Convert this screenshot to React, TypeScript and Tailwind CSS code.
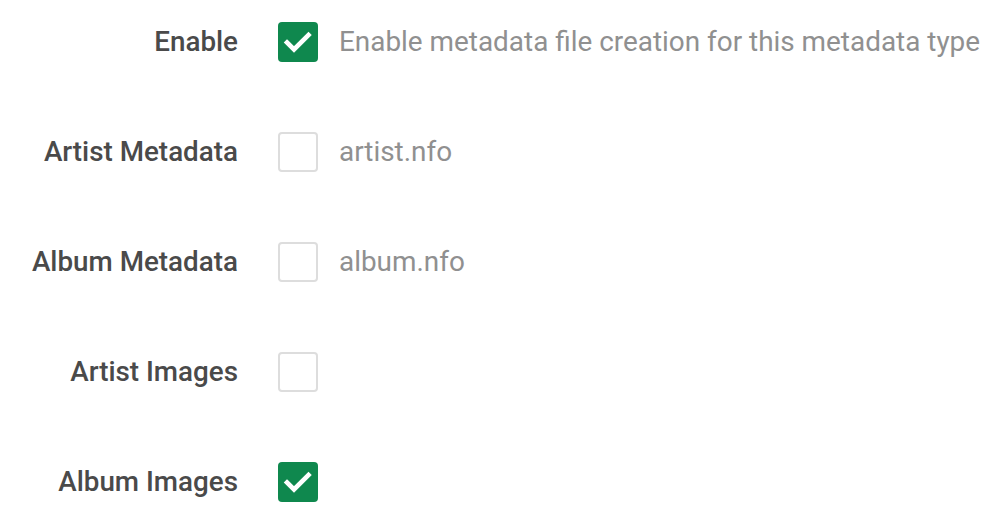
import React from "react";

type Row = { label: string; checked: boolean; help?: string };

const rows: Row[] = [
  { label: "Enable", checked: true, help: "Enable metadata file creation for this metadata type" },
  { label: "Artist Metadata", checked: false, help: "artist.nfo" },
  { label: "Album Metadata", checked: false, help: "album.nfo" },
  { label: "Artist Images", checked: false },
  { label: "Album Images", checked: true },
];

const Check = ({ checked }: { checked: boolean }) =>
  checked ? (
    <span className="flex h-[40px] w-[40px] shrink-0 items-center justify-center rounded-[4px] bg-[#0f884e]">
      <svg width="40" height="40" viewBox="0 0 40 40" fill="none">
        <path d="M9 20.5l7 7L30.5 13" stroke="white" strokeWidth="4.6" strokeLinecap="square" />
      </svg>
    </span>
  ) : (
    <span className="h-[40px] w-[40px] shrink-0 rounded-[4px] border-2 border-[#dddddd] bg-white" />
  );

export default function App() {
  return (
    <div className="h-[528px] w-[1002px] overflow-hidden bg-white font-['Roboto',sans-serif]">
      <div className="flex flex-col pt-[22px]">
        {rows.map((row) => (
          <div key={row.label} className="flex h-[110px] items-start">
            <div className="w-[238px] shrink-0 text-right text-[27.8px] font-medium leading-[40px] text-[#4a4a4a]">
              {row.label}
            </div>
            <div className="ml-[40px] flex items-start">
              <Check checked={row.checked} />
              {row.help && (
                <span className="ml-[21px] text-[27.9px] leading-[40px] text-[#909090]">{row.help}</span>
              )}
            </div>
          </div>
        ))}
      </div>
    </div>
  );
}
